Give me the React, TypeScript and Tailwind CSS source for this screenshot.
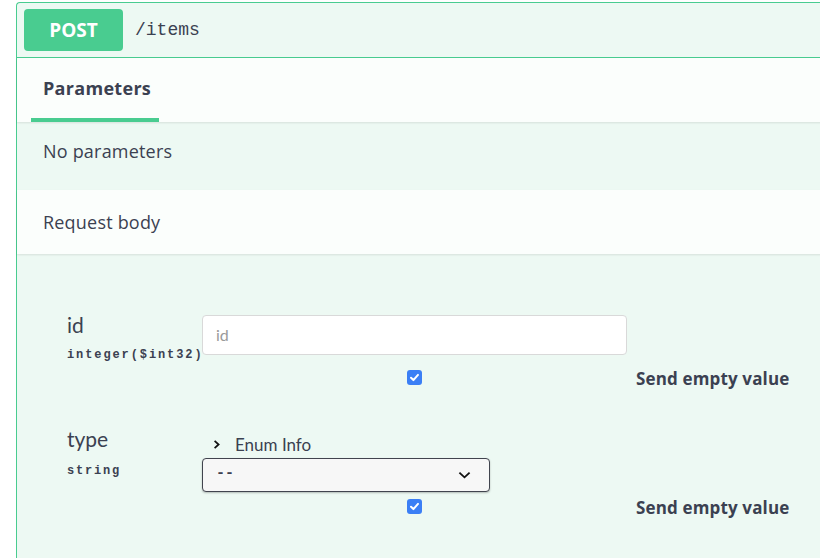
import React from 'react';

const sans = "font-['Open_Sans','Noto_Sans',sans-serif]";

const CheckBox = () => (
  <span className="inline-flex w-[15px] h-[15px] rounded-[3px] bg-[#3b7ff5] items-center justify-center">
    <svg viewBox="0 0 12 12" className="w-[11px] h-[11px]">
      <path d="M2.2 6.3 L4.8 8.8 L9.8 3.2" fill="none" stroke="white" strokeWidth="2.2" strokeLinecap="round" strokeLinejoin="round" />
    </svg>
  </span>
);

const EmptyValueRow = () => (
  <div className="flex items-start mt-[10px]">
    <div className="ml-[205px]">
      <CheckBox />
    </div>
    <span className={`ml-[214px] mt-[1px] text-[17px] tracking-[0.15px] font-bold text-[#3b4151] ${sans}`}>Send empty value</span>
  </div>
);

export default function App() {
  return (
    <div className="w-[820px] h-[558px] overflow-hidden bg-white pt-[2px] pl-[16px]">
      <div className="w-[900px] h-[600px] border-t border-l border-[#49cc90] rounded-tl-[4px] bg-[#edf9f3]">
        {/* summary */}
        <div className="flex items-center h-[55px] px-[7px] border-b border-[#49cc90]">
          <div className={`w-[99px] h-[42px] rounded-[4px] bg-[#49cc90] text-white font-bold text-[19px] flex items-center justify-center ${sans}`}>
            POST
          </div>
          <span className="ml-[12px] text-[18px] text-[#3b4151] font-['Liberation_Mono',monospace]">/items</span>
        </div>

        {/* parameters header */}
        <div className="h-[64px] bg-[#fbfefc] shadow-[0_1px_2px_rgba(0,0,0,0.1)] relative flex">
          <div className="ml-[14px] px-[12px] flex flex-col justify-end">
            <h4 className={`text-[18px] tracking-[0.3px] font-bold text-[#3b4151] mb-[16px] ${sans}`}>Parameters</h4>
            <div className="h-[4px] w-[128px] -ml-[12px] bg-[#49cc90]" />
          </div>
        </div>

        <div className="h-[68px] pt-[16px] pl-[26px]">
          <span className={`text-[18px] tracking-[0.2px] text-[#3b4151] ${sans}`}>No parameters</span>
        </div>

        {/* request body header */}
        <div className="h-[64px] bg-[#fbfefc] shadow-[0_1px_2px_rgba(0,0,0,0.1)] flex items-center pl-[26px]">
          <span className={`text-[18px] tracking-[0.2px] text-[#3b4151] ${sans}`}>Request body</span>
        </div>

        {/* body */}
        <div className="pt-[61px] pl-[50px]">
          <div className="flex">
            <div className="w-[135px]">
              <div className="text-[21px] leading-[20px] text-[#3b4151] font-['Lato',sans-serif]">id</div>
              <div className="mt-[11px] text-[12px] font-bold tracking-[1.9px] text-[#3b4151] font-['Liberation_Mono',monospace] whitespace-nowrap">
                integer($int32)
              </div>
            </div>
            <div>
              <div className="w-[425px] h-[40px] rounded-[4px] border border-[#d9d9d9] bg-white flex items-center px-[13px]">
                <span className="text-[16px] text-[#9a9a9a] font-['Lato',sans-serif]">id</span>
              </div>
              <EmptyValueRow />
            </div>
          </div>

          <div className="flex mt-[37px]">
            <div className="w-[135px]">
              <div className="text-[21px] leading-[20px] text-[#3b4151] font-['Lato',sans-serif]">type</div>
              <div className="mt-[13px] text-[12px] font-bold tracking-[1.8px] text-[#3b4151] font-['Liberation_Mono',monospace]">
                string
              </div>
            </div>
            <div>
              <div className="flex items-center h-[20px] mt-[6px] pl-[11px]">
                <svg viewBox="0 0 10 12" className="w-[8px] h-[11px]">
                  <path d="M2 1.5 L7 6 L2 10.5" fill="none" stroke="#111" strokeWidth="2.2" />
                </svg>
                <span className="ml-[14px] text-[17px] text-[#3b4151] font-['Lato',sans-serif]">Enum Info</span>
              </div>
              <div className="mt-[3px] w-[288px] h-[34px] rounded-[4px] border border-[#41444e] bg-[#f7f7f7] shadow-[0_1px_2px_rgba(0,0,0,0.25)] flex items-center justify-between pl-[13px] pr-[18px]">
                <span className="text-[15px] font-bold text-[#3b4151] font-['Liberation_Mono',monospace]">--</span>
                <svg viewBox="0 0 14 8" className="w-[13px] h-[8px]">
                  <path d="M1.5 1.5 L7 6.5 L12.5 1.5" fill="none" stroke="#111" strokeWidth="2" />
                </svg>
              </div>
              <div className="-mt-[8px]">
                <EmptyValueRow />
              </div>
            </div>
          </div>
        </div>
      </div>
    </div>
  );
}
